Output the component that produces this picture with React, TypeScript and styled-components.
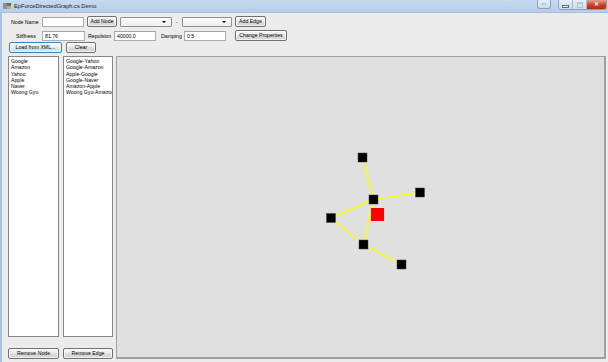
import { FC } from "react";
import styled, { createGlobalStyle } from "styled-components";

const GlobalStyle = createGlobalStyle`
  html, body {
    margin: 0;
    padding: 0;
    background: #ececec;
  }
  body {
    font-family: "Liberation Sans", Arial, sans-serif;
    color: #000;
  }
`;

const nodeNames = ["Google", "Amazon", "Yahoo", "Apple", "Naver", "Woong Gyu"];
const edgeNames = [
  "Google-Yahoo",
  "Google-Amazon",
  "Apple-Google",
  "Google-Naver",
  "Amazon-Apple",
  "Woong Gyu-Amazon",
];

// node centres, in page coordinates
const positions: Record<string, { x: number; y: number }> = {
  Google: { x: 373.5, y: 198.5 },
  Amazon: { x: 363.5, y: 243.5 },
  Yahoo: { x: 362.5, y: 156.5 },
  Apple: { x: 331, y: 217 },
  Naver: { x: 420, y: 191.5 },
  "Woong Gyu": { x: 401.5, y: 263.5 },
};

const selected = { x: 377.5, y: 213.5 };

const App: FC = () => {
  return (
    <>
      <GlobalStyle />
      <Window>
        <TitleBar>
          <AppIcon width="8" height="8" viewBox="0 0 8 8">
            <rect x="0" y="1" width="4" height="3" fill="#e8742a" />
            <rect x="4" y="1" width="4" height="3" fill="#3a78c8" />
            <rect x="0" y="4" width="4" height="3" fill="#5aa0e0" />
            <rect x="4" y="4" width="4" height="3" fill="#f0a040" />
          </AppIcon>
          <TitleText>EpForceDirectedGraph.cs Demo</TitleText>
          <Spacer />
          <ExtraButton>⇔</ExtraButton>
          <CaptionGroup>
            <CaptionButton>
              <MinGlyph />
            </CaptionButton>
            <CaptionButton>
              <MaxGlyph />
            </CaptionButton>
            <CloseButton>✕</CloseButton>
          </CaptionGroup>
        </TitleBar>

        <Body>
          <Row $top={2}>
            <Label $w={34} $pad={3}>Node Name</Label>
            <TextBox $w={42} />
            <Button $w={30} $ml={3}>Add Node</Button>
            <Combo $w={52} $ml={3} />
            <Dash>-</Dash>
            <Combo $w={50} />
            <Button $w={31} $ml={3}>Add Edge</Button>
          </Row>

          <Row $top={3}>
            <Label $w={34} $pad={8}>Stiffness</Label>
            <TextBox $w={43}>81.76</TextBox>
            <Label $w={29} $pad={3}>Repulsion</Label>
            <TextBox $w={42}>40000.0</TextBox>
            <Label $w={28} $pad={5}>Damping</Label>
            <TextBox $w={42}>0.5</TextBox>
            <Button $w={52} $ml={9}>Change Properties</Button>
          </Row>

          <Row $top={1}>
            <Button $w={53} $ml={1} $focused>
              Load from XML...
            </Button>
            <Button $w={30} $ml={4}>Clear</Button>
          </Row>

          <Main>
            <LeftColumn>
              <Lists>
                <ListBox $w={51}>
                  {nodeNames.map((n) => (
                    <ListItem key={n}>{n}</ListItem>
                  ))}
                </ListBox>
                <ListBox $w={50}>
                  {edgeNames.map((e) => (
                    <ListItem key={e}>{e}</ListItem>
                  ))}
                </ListBox>
              </Lists>
              <BottomButtons>
                <Button $w={51}>Remove Node</Button>
                <Button $w={50}>Remove Edge</Button>
              </BottomButtons>
            </LeftColumn>

            <Canvas>
              <GraphSvg>
                <g transform="translate(-117,-56)">
                  {edgeNames.map((e) => {
                    const [a, b] = e.split("-");
                    const p = positions[a];
                    const q = positions[b];
                    return (
                      <line
                        key={e}
                        x1={p.x}
                        y1={p.y}
                        x2={q.x}
                        y2={q.y}
                        stroke="#ffff00"
                        strokeWidth="1.4"
                      />
                    );
                  })}
                  {Object.entries(positions).map(([name, p]) => (
                    <rect
                      key={name}
                      x={p.x - 4.5}
                      y={p.y - 4.5}
                      width="9"
                      height="9"
                      fill="#000"
                      stroke="#444"
                      strokeWidth="0.5"
                    />
                  ))}
                  <rect
                    x={selected.x - 6.5}
                    y={selected.y - 6.5}
                    width="13"
                    height="13"
                    fill="#ff0000"
                  />
                </g>
              </GraphSvg>
            </Canvas>
          </Main>
        </Body>
      </Window>
    </>
  );
};

export default App;

const Window = styled.div`
  width: 608px;
  height: 362px;
  display: flex;
  flex-direction: column;
  overflow: hidden;
  background: #ececec;
`;

const TitleBar = styled.div`
  height: 13px;
  flex: none;
  display: flex;
  align-items: flex-start;
  background: linear-gradient(#c6daf0, #b7cee9);
  border-bottom: 1px solid #a9bfd9;
  box-sizing: border-box;
`;

const AppIcon = styled.svg`
  margin: 2px 0 0 3px;
  flex: none;
`;

const TitleText = styled.span`
  margin: 2px 0 0 3px;
  font-size: 5.7px;
  line-height: 8px;
  white-space: nowrap;
  color: #1a1a1a;
`;

const Spacer = styled.div`
  flex: 1;
`;

const ExtraButton = styled.div`
  width: 14px;
  height: 9px;
  box-sizing: border-box;
  border: 1px solid #8ba0b9;
  border-top: none;
  border-radius: 0 0 3px 3px;
  background: linear-gradient(#e6eef8, #cddcee);
  font-size: 7px;
  line-height: 8px;
  text-align: center;
  color: #56657a;
  margin-right: 7px;
`;

const CaptionGroup = styled.div`
  display: flex;
  height: 9px;
  border: 1px solid #8ba0b9;
  border-top: none;
  border-radius: 0 0 3px 3px;
  overflow: hidden;
  margin-right: 1px;
`;

const CaptionButton = styled.div`
  width: 13px;
  height: 100%;
  background: linear-gradient(#e6eff9, #cbdbee);
  border-right: 1px solid #a7b9ce;
  display: flex;
  align-items: center;
  justify-content: center;
`;

const MinGlyph = styled.div`
  width: 5px;
  height: 1px;
  background: #fff;
  border: 1px solid #5a6a80;
  margin-top: 4px;
`;

const MaxGlyph = styled.div`
  width: 4px;
  height: 3px;
  border: 1px solid #b4c0ce;
  border-top-width: 2px;
`;

const CloseButton = styled.div`
  width: 19px;
  height: 100%;
  background: linear-gradient(#e8a090, #c7402a 55%, #b52a14);
  color: #fff;
  font-size: 6px;
  line-height: 9px;
  text-align: center;
  font-weight: bold;
`;

const Body = styled.div`
  flex: 1;
  display: flex;
  flex-direction: column;
  border-left: 2px solid #a9c2e0;
  padding: 1px 0 0 6px;
`;

const Row = styled.div<{ $top: number }>`
  display: flex;
  align-items: center;
  height: 11px;
  margin-top: ${(p) => p.$top}px;
`;

const Label = styled.div<{ $w: number; $pad: number }>`
  width: ${(p) => p.$w}px;
  padding-left: ${(p) => p.$pad}px;
  box-sizing: border-box;
  font-size: 5.2px;
  white-space: nowrap;
`;

const TextBox = styled.div<{ $w: number }>`
  width: ${(p) => p.$w}px;
  height: 10px;
  box-sizing: border-box;
  border: 1px solid #abadb3;
  border-top-color: #a0a4ab;
  background: #fff;
  font-size: 5.2px;
  line-height: 8px;
  padding-left: 2px;
  white-space: nowrap;
`;

const Button = styled.div<{ $w: number; $ml?: number; $focused?: boolean }>`
  width: ${(p) => p.$w}px;
  height: 11px;
  margin-left: ${(p) => p.$ml ?? 0}px;
  box-sizing: border-box;
  border: 1px solid ${(p) => (p.$focused ? "#3c7fb1" : "#707070")};
  border-radius: 2px;
  background: ${(p) =>
    p.$focused
      ? "linear-gradient(#f4f9fd, #e6f2fb 50%, #d6eaf8 50%, #c9e2f5)"
      : "linear-gradient(#f4f4f4, #ececec 50%, #dedede 50%, #d2d2d2)"};
  box-shadow: inset 0 0 0 1px rgba(255, 255, 255, 0.7);
  font-size: 5.2px;
  line-height: 9px;
  text-align: center;
  white-space: nowrap;
`;

const Combo = styled.div<{ $w: number; $ml?: number }>`
  position: relative;
  width: ${(p) => p.$w}px;
  height: 10px;
  margin-left: ${(p) => p.$ml ?? 0}px;
  box-sizing: border-box;
  border: 1px solid #8e8f8f;
  border-radius: 1px;
  background: linear-gradient(#fbfbfb, #eeeeee);
  &::after {
    content: "";
    position: absolute;
    right: 5px;
    top: 3px;
    border-left: 2px solid transparent;
    border-right: 2px solid transparent;
    border-top: 2px solid #000;
  }
`;

const Dash = styled.div`
  width: 10px;
  text-align: center;
  font-size: 5.2px;
`;

const Main = styled.div`
  display: flex;
  margin-top: 3px;
  height: 303px;
`;

const LeftColumn = styled.div`
  width: 105px;
  display: flex;
  flex-direction: column;
`;

const Lists = styled.div`
  display: flex;
  gap: 4px;
  height: 281px;
`;

const ListBox = styled.div<{ $w: number }>`
  width: ${(p) => p.$w}px;
  box-sizing: border-box;
  border: 1px solid #828790;
  background: #fff;
  padding: 1px 0 0 2px;
  overflow: hidden;
`;

const ListItem = styled.div`
  font-size: 5.2px;
  line-height: 6.3px;
  height: 6.3px;
  white-space: nowrap;
`;

const BottomButtons = styled.div`
  display: flex;
  gap: 4px;
  margin-top: 11px;
`;

const Canvas = styled.div`
  position: relative;
  margin-left: 3px;
  width: 490px;
  height: 303px;
  box-sizing: border-box;
  background: #e0e0e0;
  border: 1px solid #a0a0a0;
  border-right-width: 2px;
  border-bottom-width: 2px;
`;

const GraphSvg = styled.svg`
  position: absolute;
  left: 0;
  top: 0;
  width: 100%;
  height: 100%;
`;
